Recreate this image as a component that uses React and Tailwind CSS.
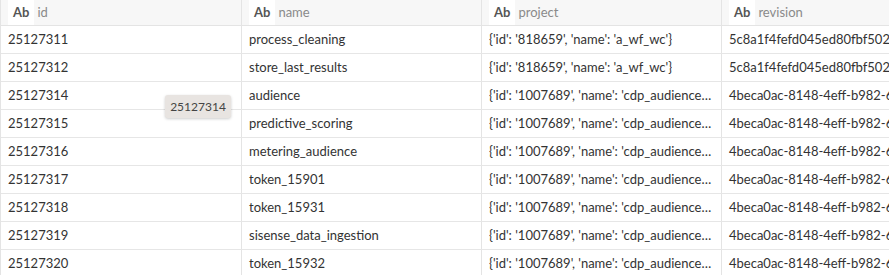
import React from 'react';

const columns = [
  { key: 'id', label: 'id', width: 'w-[241px]' },
  { key: 'name', label: 'name', width: 'w-[240px]' },
  { key: 'project', label: 'project', width: 'w-[240px]' },
  { key: 'revision', label: 'revision', width: 'w-[320px]' },
];

const p1 = "{'id': '818659', 'name': 'a_wf_wc'}";
const p2 = "{'id': '1007689', 'name': 'cdp_audience_segments'}";
const r1 = '5c8a1f4fefd045ed80fbf5021a7c3e9b';
const r2 = '4beca0ac-8148-4eff-b982-6c1d0e5a7f23';

const rows = [
  { id: '25127311', name: 'process_cleaning', project: p1, revision: r1 },
  { id: '25127312', name: 'store_last_results', project: p1, revision: r1 },
  { id: '25127314', name: 'audience', project: p2, revision: r2 },
  { id: '25127315', name: 'predictive_scoring', project: p2, revision: r2 },
  { id: '25127316', name: 'metering_audience', project: p2, revision: r2 },
  { id: '25127317', name: 'token_15901', project: p2, revision: r2 },
  { id: '25127318', name: 'token_15931', project: p2, revision: r2 },
  { id: '25127319', name: 'sisense_data_ingestion', project: p2, revision: r2 },
  { id: '25127320', name: 'token_15932', project: p2, revision: r2 },
];

const App = () => {
  return (
    <div className="relative w-[889px] h-[275px] overflow-hidden bg-white font-['Lato',sans-serif] text-[13px]">
      <div className="flex flex-col w-[1100px] border-l border-[#e4e4e4]">
        <div className="flex h-[26px] bg-[#f7f7f7] border-b border-[#e4e4e4]">
          {columns.map((c) => (
            <div key={c.key} className={`${c.width} shrink-0 flex items-stretch pl-[7px] border-r border-[#e4e4e4]`}>
              <span className="flex items-center px-[5px] bg-white text-[13px] font-bold text-[#555]">Ab</span>
              <span className="flex items-center pl-[3px] text-[#8a8a8a]">{c.label}</span>
            </div>
          ))}
        </div>
        {rows.map((r) => (
          <div key={r.id} className="flex h-[28px] border-b border-[#e6e6e6]">
            {columns.map((c) => (
              <div
                key={c.key}
                className={`${c.width} shrink-0 flex items-center px-[7px] pt-[1px] border-r border-[#e4e4e4] text-[#333] whitespace-nowrap overflow-hidden`}
              >
                <span className={c.key === 'project' ? 'truncate' : ''}>{r[c.key]}</span>
              </div>
            ))}
          </div>
        ))}
      </div>
      <div className="absolute left-[165px] top-[95px] w-[66px] h-[23px] flex items-center justify-center rounded-[3px] bg-[#e8e4e1] text-[12px] text-[#444] shadow-[0_1px_3px_rgba(0,0,0,0.2)]">
        25127314
      </div>
    </div>
  );
};

export default App;
